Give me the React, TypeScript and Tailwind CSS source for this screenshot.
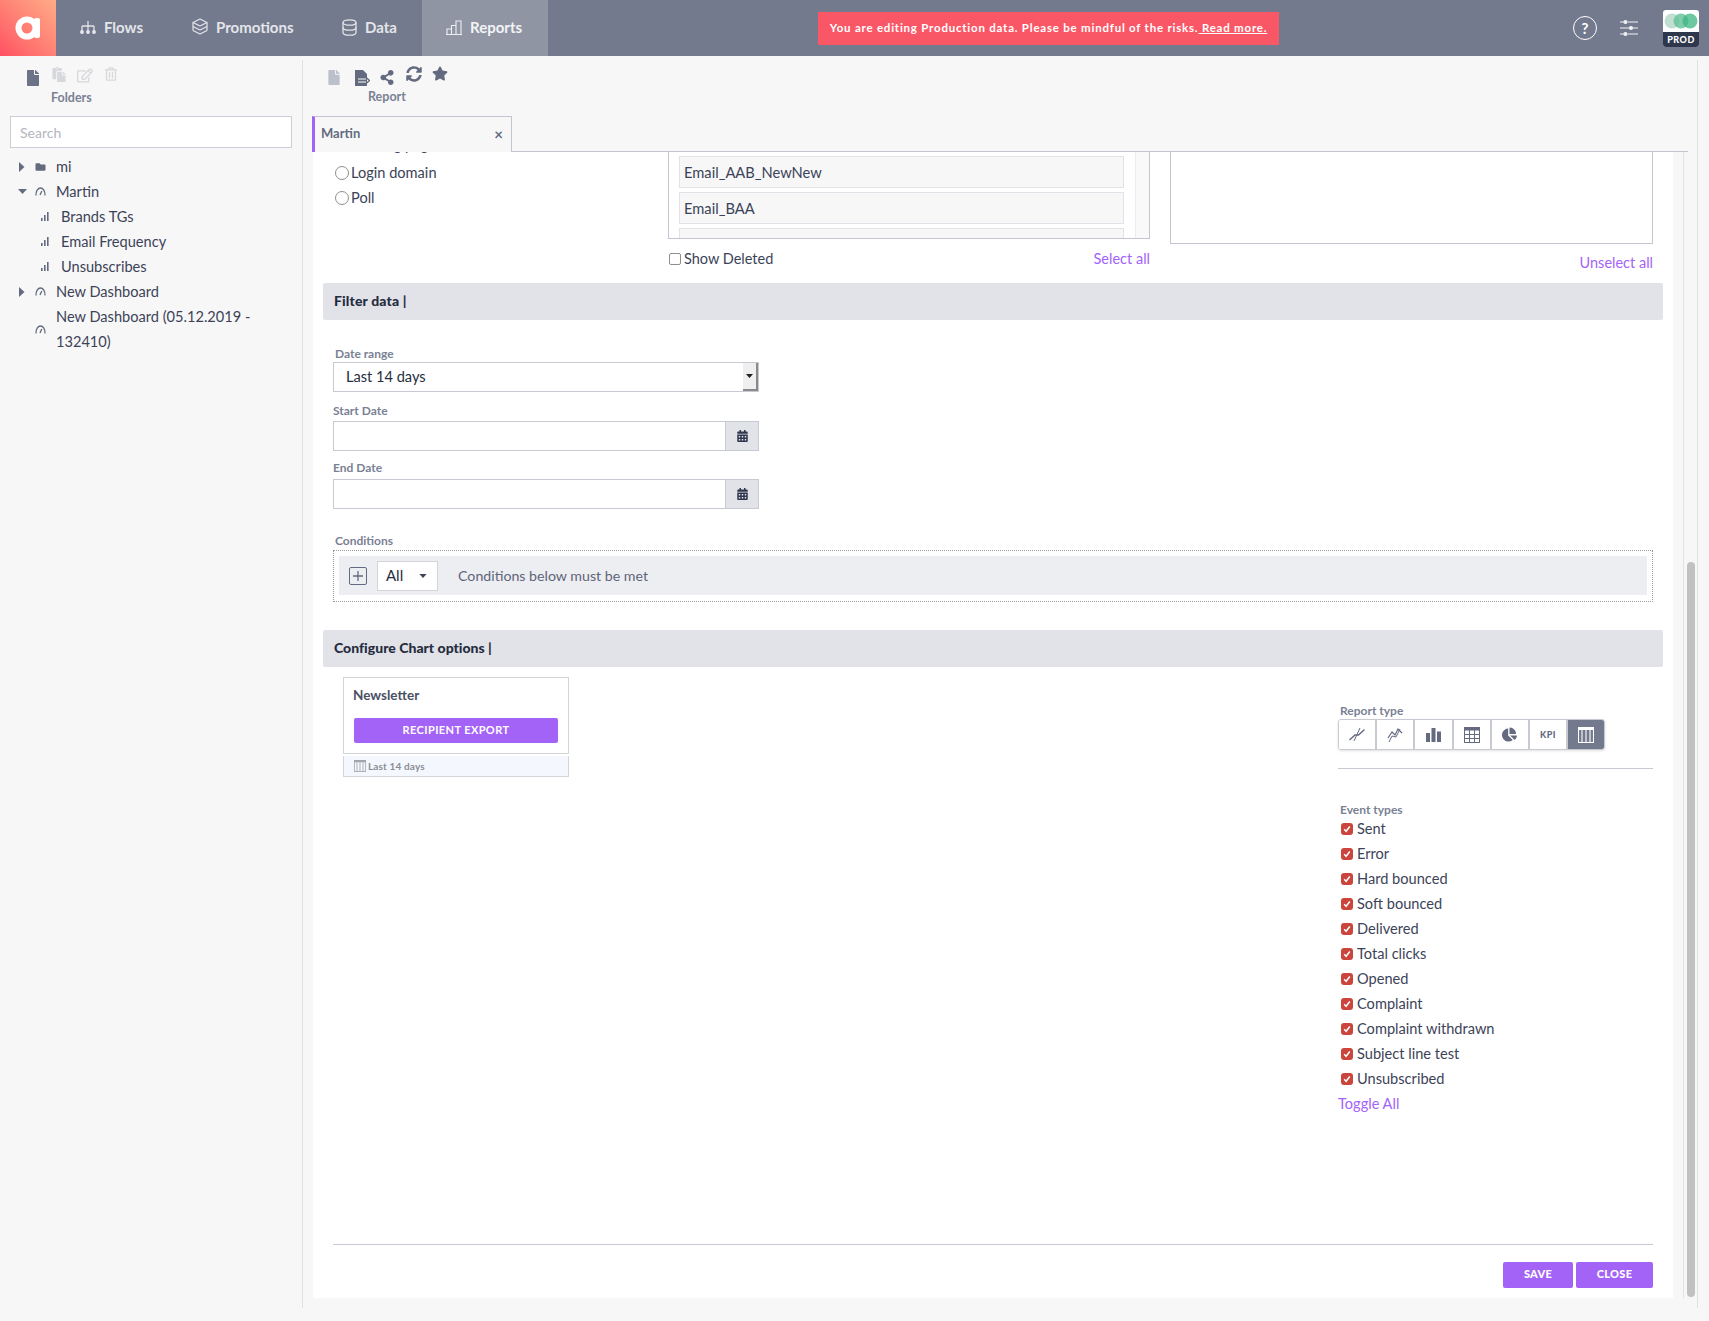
import React from "react";
import { FaFile, FaPaste, FaRegEdit, FaRegTrashAlt, FaShareAlt, FaSyncAlt, FaStar, FaFolder, FaCalendarAlt, FaChartPie } from "react-icons/fa";

const Flow = () => (
  <svg width="16" height="14" viewBox="0 0 16 14" fill="none" stroke="#e4e5ea" strokeWidth="1.3">
    <path d="M8 1v11M2 6h12M2 6v6M14 6v6" />
    <circle cx="2" cy="12" r="1.3" fill="#e4e5ea" /><circle cx="8" cy="12" r="1.3" fill="#e4e5ea" /><circle cx="14" cy="12" r="1.3" fill="#e4e5ea" />
  </svg>
);
const Layers = () => (
  <svg width="16" height="18" viewBox="0 0 16 18" fill="none" stroke="#e4e5ea" strokeWidth="1.2" strokeLinejoin="round">
    <path d="M8 1l7 3.5L8 8 1 4.5 8 1z" /><path d="M1 8.5L8 12l7-3.500" /><path d="M1 12.5L8 16l7-3.500" /><path d="M1 4.5v8M15 4.5v8" />
  </svg>
);
const Db = () => (
  <svg width="15" height="17" viewBox="0 0 15 17" fill="none" stroke="#e4e5ea" strokeWidth="1.3">
    <ellipse cx="7.5" cy="3.5" rx="6.5" ry="2.7" /><path d="M1 3.5v10c0 1.5 3 2.7 6.5 2.7s6.5-1.2 6.5-2.7v-10" /><path d="M1 8.5c0 1.5 3 2.7 6.5 2.7s6.5-1.2 6.5-2.7" />
  </svg>
);
const BarsOutline = () => (
  <svg width="16" height="15" viewBox="0 0 16 15" fill="none" stroke="#eceef2" strokeWidth="1.1">
    <path d="M1 14V9h4.5v5M5.5 14V5.5H10V14M10 14V1h5v13M0 14.5h16" />
  </svg>
);
const Gauge = () => (
  <svg width="11" height="9" viewBox="0 0 11 9" fill="none" stroke="#646b80" strokeWidth="1.3" className="shrink-0">
    <path d="M1 8.5C.6 4 3 1 5.5 1S10.400 4 10 8.500" /><path d="M5 8l1.800-4" />
  </svg>
);
const MiniBars = () => (
  <svg width="8" height="9" viewBox="0 0 8 9" fill="#646b80" className="shrink-0">
    <rect x="0" y="6" width="1.600" height="3" /><rect x="3" y="3" width="1.600" height="6" /><rect x="6" y="0" width="1.600" height="9" />
  </svg>
);
const CaretRight = () => (
  <svg width="6" height="10" viewBox="0 0 6 10" fill="#646b80" className="shrink-0"><path d="M0 0l5.500 5L0 10z" /></svg>
);
const CaretDown = ({ color = "#646b80", w = 9, h = 5 }: { color?: string; w?: number; h?: number }) => (
  <svg width={w} height={h} viewBox="0 0 9 5" fill={color} className="shrink-0"><path d="M0 0h9L4.500 5z" /></svg>
);
const DocExport = () => (
  <svg width="15" height="16" viewBox="0 0 15 16" className="shrink-0">
    <path d="M0 0h8l4 4v12H0z" fill="#646b80" />
    <path d="M3 9h8M3 12h8" stroke="#fff" strokeWidth="1" />
    <path d="M10 6.500l4.500 4-4.500 4" fill="none" stroke="#646b80" strokeWidth="1.300" />
  </svg>
);
const Check = () => (
  <span className="flex h-[12px] w-[12px] shrink-0 items-center justify-center rounded-[3px] bg-[#cb453c]">
    <svg width="8" height="8" viewBox="0 0 8 8" fill="none" stroke="#fff" strokeWidth="1.500"><path d="M1.200 4.300l1.900 2L6.800 1.500" /></svg>
  </span>
);
const TableIcon = ({ color = "#646b80" }: { color?: string }) => (
  <svg width="16" height="16" viewBox="0 0 16 16" fill="none" stroke={color} strokeWidth="1">
    <rect x="0.500" y="0.500" width="15" height="15" /><rect x="0" y="0" width="16" height="3.500" fill={color} stroke="none" /><path d="M5.500 3v12.500M10.500 3v12.500M0 7.500h16M0 11.500h16" />
  </svg>
);
const Columns = ({ color, size = 16 }: { color: string; size?: number }) => (
  <svg width={size} height={size} viewBox="0 0 16 16" fill="none" stroke={color} strokeWidth="1.100">
    <rect x="0.500" y="0.500" width="15" height="15" /><rect x="0" y="0" width="16" height="3" fill={color} stroke="none" /><path d="M4 3v12.500M8 3v12.500M12 3v12.500" />
  </svg>
);

const tree = [
  { k: "f", t: "mi" },
  { k: "o", t: "Martin" },
  { k: "l", t: "Brands TGs" },
  { k: "l", t: "Email Frequency" },
  { k: "l", t: "Unsubscribes" },
  { k: "c", t: "New Dashboard" },
];
const events = ["Sent", "Error", "Hard bounced", "Soft bounced", "Delivered", "Total clicks", "Opened", "Complaint", "Complaint withdrawn", "Subject line test", "Unsubscribed"];

export default function App() {
  return (
    <div className="h-[1321px] w-[1709px] overflow-hidden bg-[#f7f7f7] font-['Lato',sans-serif] text-[#3c4358]">
      <header className="flex h-[56px] items-stretch bg-[#737a8d] text-[15px] font-bold text-[#e4e5ea]">
        <div className="flex w-[56px] items-center justify-center bg-gradient-to-tr from-[#ff4f62] to-[#ffab88]">
          <svg width="26" height="24" viewBox="0 0 26 24" fill="none">
            <circle cx="12" cy="12" r="8.500" stroke="#fff" strokeWidth="6" /><rect x="19" y="2" width="6" height="20" rx="2" fill="#fff" />
          </svg>
        </div>
        <div className="flex w-[112px] items-center gap-2 pb-[2px] pl-6"><Flow />Flows</div>
        <div className="flex w-[150px] items-center gap-2 pb-[2px] pl-6"><Layers />Promotions</div>
        <div className="flex w-[104px] items-center gap-2 pb-[2px] pl-6"><Db />Data</div>
        <div className="flex w-[126px] items-center gap-2 bg-[#9095a3] pb-[2px] pl-6 text-[#f3f4f6]"><BarsOutline />Reports</div>
        <div className="my-[12px] ml-[270px] flex h-[33px] w-[461px] items-center justify-center bg-[#fa5766] pb-[2px] text-[11.500px] tracking-[0.78px] text-white">
          <span>You are editing Production data. Please be mindful of the risks.<span className="underline"> Read more.</span></span>
        </div>
        <div className="ml-[294px] flex h-[24px] w-[24px] items-center justify-center self-center rounded-full border-[1.5px] border-white text-[15px] font-bold text-white">?</div>
        <div className="ml-[23px] self-center">
          <svg width="18" height="18" viewBox="0 0 18 18" fill="none" stroke="#f0f1f4" strokeWidth="1.200">
            <path d="M0 3h4M8 3h10M0 9h9M13 9h5M0 15h4M8 15h10" />
            <circle cx="5.500" cy="3" r="1.500" fill="#f0f1f4" /><circle cx="11" cy="9" r="1.500" fill="#f0f1f4" /><circle cx="5.500" cy="15" r="1.500" fill="#f0f1f4" />
          </svg>
        </div>
        <div className="ml-[25px] mt-[10px] h-[37px] w-[36px] overflow-hidden rounded-[3px] bg-white">
          <div className="flex h-[22px] items-center justify-center">
            <svg width="34" height="16" viewBox="0 0 34 16">
              <circle cx="8" cy="8" r="7.500" fill="#c0dfd0" /><circle cx="17" cy="8" r="7.500" fill="#61c096" fillOpacity="0.800" /><circle cx="26" cy="8" r="7.500" fill="#3cb583" fillOpacity="0.750" />
            </svg>
          </div>
          <div className="flex h-[15px] items-center justify-center bg-[#2f374c] text-[9px] font-black tracking-[0.5px] text-white">PROD</div>
        </div>
      </header>

      <div className="flex">
        <aside className="mt-[4px] h-[1248px] w-[303px] shrink-0 border-r border-[#e2e2e5]">
          <div className="ml-[27px] mt-[6px] flex h-[24px] items-start">
            <FaFile className="mt-[4px] h-[16px] w-[12px] text-[#6c7387]" />
            <FaPaste className="ml-[12px] mt-[1px] h-[15px] w-[16px] text-[#d7d8dd]" />
            <FaRegEdit className="ml-[10px] mt-[2px] h-[15px] w-[16px] text-[#d7d8dd]" />
            <FaRegTrashAlt className="ml-[12px] h-[16px] w-[12px] text-[#d7d8dd]" />
          </div>
          <div className="ml-[51px] h-[16px] text-[12.500px] font-bold leading-[16px] text-[#7a8194]">Folders</div>
          <div className="ml-[10px] mt-[10px] flex h-[32px] w-[282px] items-center border border-[#ccced6] bg-white px-[9px] text-[14px] text-[#b3b6c0]">Search</div>
          <div className="mt-[6px] text-[14.600px] leading-[25px]">
            {tree.map((r) => (
              <div key={r.t} className={r.k === "l" ? "flex h-[25px] items-center pl-[41px]" : "flex h-[25px] items-center pl-[19px]"}>
                {r.k === "f" || r.k === "c" ? <CaretRight /> : null}
                {r.k === "o" ? <span className="-ml-[1px] flex"><CaretDown /></span> : null}
                {r.k === "f" ? <FaFolder className="ml-[10px] h-[10px] w-[11px] shrink-0 text-[#646b80]" /> : null}
                {r.k === "o" ? <span className="ml-[8px] flex"><Gauge /></span> : null}
                {r.k === "c" ? <span className="ml-[10px] flex"><Gauge /></span> : null}
                {r.k === "l" ? <MiniBars /> : null}
                <span className={r.k === "l" ? "ml-[12px]" : "ml-[10px]"}>{r.t}</span>
              </div>
            ))}
            <div className="flex items-center pl-[35px]">
              <Gauge />
              <span className="ml-[10px] w-[210px]">New Dashboard (05.12.2019 - 132410)</span>
            </div>
          </div>
        </aside>

        <main className="mt-[4px] h-[1248px] w-[1395px] shrink-0 border-r border-[#e2e2e5]">
          <div className="ml-[25px] mt-[3px] flex h-[26px] items-start">
            <FaFile className="mt-[7px] h-[15px] w-[12px] text-[#bcc0cb]" />
            <span className="ml-[15px] mt-[7px] flex"><DocExport /></span>
            <FaShareAlt className="ml-[10px] mt-[7px] h-[15px] w-[14px] text-[#646b80]" />
            <FaSyncAlt className="ml-[12px] mt-[3px] h-[16px] w-[16px] text-[#646b80]" />
            <FaStar className="ml-[10px] mt-[3px] h-[15px] w-[16px] text-[#646b80]" />
          </div>
          <div className="ml-[65px] h-[16px] text-[12.500px] font-bold leading-[16px] text-[#7a8194]">Report</div>
          <div className="ml-[9px] mt-[11px] flex h-[36px] w-[1376px] border-b border-[#c3c5d0]">
            <div className="flex h-[36px] w-[200px] items-center justify-between border-l-[3px] border-r border-t border-[#c3c5d0] border-l-[#a463f7] bg-[#f7f7f7] pb-[1px] pl-[6px] pr-[8px] text-[13px] font-bold text-[#646b80]">
              <span>Martin</span><span className="text-[15px] leading-none">×</span>
            </div>
          </div>

          <div className="flex h-[1146px]">
            <div className="ml-[10px] h-[1146px] w-[1360px] shrink-0 overflow-hidden bg-white">
              <div className="flex h-[131px] pl-[22px]">
                <div className="-mt-[22px] w-[333px] text-[14.600px]">
                  <div className="flex h-[30px] items-center gap-[2px]">
                    <span className="h-[14px] w-[14px] rounded-full border border-[#8f8f8f] bg-white" />
                    <span>Landing page</span>
                  </div>
                  {["Login domain", "Poll"].map((t) => (
                    <div key={t} className="flex h-[25px] items-center gap-[2px]">
                      <span className="h-[14px] w-[14px] rounded-full border border-[#8f8f8f] bg-white" />
                      <span>{t}</span>
                    </div>
                  ))}
                </div>
                <div className="w-[482px]">
                  <div className="flex h-[87px] overflow-hidden border-b border-l border-r border-[#c3c5d0]">
                    <div className="w-[466px] pl-[10px] pr-[11px] pt-[4px]">
                      {["Email_AAB_NewNew", "Email_BAA", ""].map((t) => (
                        <div key={t} className="mb-[4px] flex h-[32px] items-center border border-[#e2e3e8] bg-[#f7f7f8] pl-[4px] text-[14.700px]">{t}</div>
                      ))}
                    </div>
                    <div className="w-[14px] border-l border-[#ececef] bg-[#f9f9fa]" />
                  </div>
                  <div className="mt-[9px] flex h-[22px] items-center justify-between text-[14.500px]">
                    <span className="flex items-center gap-[3px]"><span className="ml-[1px] h-[12px] w-[12px] rounded-[2px] border border-[#8f8f8f] bg-white" />Show Deleted</span>
                    <span className="text-[#a463f7]">Select all</span>
                  </div>
                </div>
                <div className="ml-[20px] w-[483px]">
                  <div className="h-[92px] border-b border-l border-r border-[#c3c5d0]" />
                  <div className="mt-[8px] h-[22px] text-right text-[14.500px] leading-[22px] text-[#a463f7]">Unselect all</div>
                </div>
              </div>

              <div className="ml-[10px] flex h-[37px] w-[1340px] items-center rounded-[2px] bg-[#e2e3e8] pb-[2px] pl-[11px] text-[14px] font-black tracking-[0.15px] text-[#262d40]">Filter data |</div>

              <div className="pl-[20px]">
                <div className="ml-[2px] mt-[26px] h-[16px] text-[12px] font-bold leading-[16px] text-[#7a8194]">Date range</div>
                <div className="flex h-[30px] w-[426px] items-center justify-between border border-[#c8cad2] bg-white pl-[12px] text-[14.600px] text-[#262d40]">
                  <span>Last 14 days</span>
                  <span className="flex h-[28px] w-[15px] items-center justify-center border-b-2 border-r-2 border-[#8a8a8a] bg-[#efefef]"><CaretDown color="#222" w={7} h={4} /></span>
                </div>
                <div className="mt-[11px] h-[16px] text-[12px] font-bold leading-[16px] text-[#7a8194]">Start Date</div>
                <div className="mt-[2px] flex h-[30px] w-[426px] border border-[#c8cad2] bg-white">
                  <div className="flex-1" />
                  <div className="flex w-[33px] items-center justify-center border-l border-[#c8cad2] bg-[#e2e3e8]"><FaCalendarAlt className="h-[12px] w-[11px] text-[#2f374c]" /></div>
                </div>
                <div className="mt-[9px] h-[16px] text-[12px] font-bold leading-[16px] text-[#7a8194]">End Date</div>
                <div className="mt-[3px] flex h-[30px] w-[426px] border border-[#c8cad2] bg-white">
                  <div className="flex-1" />
                  <div className="flex w-[33px] items-center justify-center border-l border-[#c8cad2] bg-[#e2e3e8]"><FaCalendarAlt className="h-[12px] w-[11px] text-[#2f374c]" /></div>
                </div>
                <div className="ml-[2px] mt-[24px] h-[16px] text-[12px] font-bold leading-[16px] text-[#7a8194]">Conditions</div>
                <div className="mt-[1px] h-[52px] w-[1320px] border border-dotted border-[#9a9a9a] p-[5px]">
                  <div className="flex h-[39px] items-center bg-[#edeef2] pl-[10px]">
                    <span className="flex h-[18px] w-[18px] items-center justify-center rounded-[2px] border border-[#646b80]">
                      <svg width="12" height="12" viewBox="0 0 12 12" stroke="#646b80" strokeWidth="1.300"><path d="M6 1v10M1 6h10" /></svg>
                    </span>
                    <span className="ml-[10px] flex h-[30px] w-[61px] items-center border border-[#d4d5db] bg-white pl-[8px] text-[15px] text-[#262d40]">
                      All<span className="ml-[16px] flex"><CaretDown color="#3c4358" w={8} h={4} /></span>
                    </span>
                    <span className="ml-[20px] text-[14.200px] text-[#5e6579]">Conditions below must be met</span>
                  </div>
                </div>
              </div>

              <div className="ml-[10px] mt-[28px] flex h-[37px] w-[1340px] items-center rounded-[2px] bg-[#e2e3e8] pb-[2px] pl-[11px] text-[14px] font-black tracking-[0.02px] text-[#262d40]">Configure Chart options |</div>

              <div className="flex justify-between pl-[30px] pr-[20px]">
                <div className="mt-[10px] w-[226px]">
                  <div className="h-[77px] border border-[#d4d5db] px-[10px]">
                    <div className="-ml-[1px] mt-[6px] h-[22px] text-[13.500px] font-bold leading-[22px] text-[#4a5064]">Newsletter</div>
                    <div className="mt-[12px] flex h-[25px] items-center justify-center rounded-[2px] bg-[#a463f7] pb-[1px] text-[11px] font-bold tracking-[0.4px] text-white">RECIPIENT EXPORT</div>
                  </div>
                  <div className="mt-[2px] flex h-[21px] items-center gap-[2px] border-b border-l border-r border-[#d4d5db] bg-[#f4f7fd] pl-[10px] text-[10px] font-bold tracking-[0.15px] text-[#8a8d96]">
                    <Columns color="#a2a4aa" size={12} />Last 14 days
                  </div>
                </div>

                <div className="mt-[36px] w-[315px]">
                  <div className="ml-[2px] h-[16px] text-[12px] font-bold leading-[16px] text-[#7a8194]">Report type</div>
                  <div className="flex h-[31px] w-[267px] overflow-hidden rounded-[3px] border border-[#c8cad2] shadow-sm">
                    {[0, 1, 2, 3, 4, 5].map((i) => (
                      <div key={i} className="flex flex-1 items-center justify-center border-r-2 border-[#c8cad2] bg-white">
                        {i === 0 ? <svg width="16" height="15" viewBox="0 0 16 15" fill="none" stroke="#646b80" strokeWidth="1.400"><path d="M0.500 13L6 8h3.500l6-5.500" /><path d="M5 14l6-13" strokeWidth="1" /></svg> : null}
                        {i === 1 ? <svg width="16" height="16" viewBox="0 0 16 16" fill="none" stroke="#646b80" strokeWidth="1.200"><path d="M1 11l4-6 3 3 3-6 4 4" /><path d="M2 15l3-6 4 1 4-8" strokeWidth="1" /></svg> : null}
                        {i === 2 ? <svg width="15" height="14" viewBox="0 0 15 14" fill="#646b80"><rect x="0" y="5" width="4" height="9" /><rect x="5.500" y="0" width="4" height="14" /><rect x="11" y="3.500" width="4" height="10.500" /></svg> : null}
                        {i === 3 ? <TableIcon /> : null}
                        {i === 4 ? <FaChartPie className="h-[15px] w-[15px] text-[#646b80]" /> : null}
                        {i === 5 ? <span className="text-[9px] font-black tracking-[0.5px] text-[#646b80]">KPI</span> : null}
                      </div>
                    ))}
                    <div className="flex w-[36px] items-center justify-center bg-[#737a8d]"><Columns color="#fff" /></div>
                  </div>
                  <div className="mt-[18px] h-px bg-[#c8cad2]" />
                  <div className="ml-[2px] mt-[33px] h-[16px] text-[12px] font-bold leading-[16px] text-[#7a8194]">Event types</div>
                  <div className="-mt-[2px] text-[14.600px]">
                    {events.map((e) => (
                      <div key={e} className="flex h-[25px] items-center gap-[4px] pl-[3px]"><Check /><span>{e}</span></div>
                    ))}
                    <div className="h-[25px] leading-[25px] text-[#a463f7]">Toggle All</div>
                  </div>
                </div>
              </div>

              <div className="ml-[20px] mt-[128px] h-px w-[1320px] bg-[#c8cad2]" />
              <div className="mt-[17px] flex w-[1340px] justify-end gap-[3px] text-[11px] font-black tracking-[0.3px] text-white">
                <div className="flex h-[26px] w-[70px] items-center justify-center rounded-[2px] bg-[#a463f7] pb-[1px]">SAVE</div>
                <div className="flex h-[26px] w-[77px] items-center justify-center rounded-[2px] bg-[#a463f7] pb-[1px]">CLOSE</div>
              </div>
            </div>
            <div className="ml-[10px] flex w-[15px] flex-col justify-end border-l border-[#e2e2e5] pl-[3px]">
              <div className="mb-[1px] h-[735px] w-[8px] rounded-[4px] bg-[#c1c1c1]" />
            </div>
          </div>
        </main>
      </div>
    </div>
  );
}
